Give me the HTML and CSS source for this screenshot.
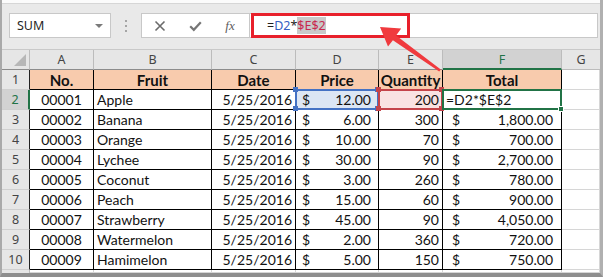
FILE: index.html
```html
<!DOCTYPE html>
<html lang="en">
<head>
  <meta charset="UTF-8">
  <meta name="viewport" content="width=device-width, initial-scale=1.0">
  <title>Fruit sheet - absolute reference</title>
  <link rel="stylesheet" href="styles.css">
</head>
<body>
  <div class="window">
    <div class="toolbar">
      <div class="namebox">
        <span class="name">SUM</span>
        <span class="caret"></span>
      </div>
      <div class="grip"><i></i><i></i><i></i></div>
      <div class="fbuttons">
        <svg class="btn-icon" width="12" height="12" viewBox="0 0 12 12">
          <path d="M1.5 1.5 L10.5 10.5 M10.5 1.5 L1.5 10.5" stroke="#6b6b6b" stroke-width="1.6" fill="none"/>
        </svg>
        <svg class="btn-icon" width="13" height="12" viewBox="0 0 13 12">
          <path d="M1.2 6.2 L4.8 9.8 L11.8 2.2" stroke="#767676" stroke-width="2.2" fill="none"/>
        </svg>
        <span class="fx">fx</span>
      </div>
      <div class="formula">
        <div class="mark">=<span class="ref-d">D2</span>*<span class="ref-e">$E$2</span></div>
      </div>
    </div>

    <div class="sheet">
      <!-- column headers -->
      <div class="hc corner"><span class="tri"></span></div>
      <div class="hc">A</div>
      <div class="hc">B</div>
      <div class="hc">C</div>
      <div class="hc">D</div>
      <div class="hc">E</div>
      <div class="hc sel">F</div>
      <div class="hc last">G</div>

      <!-- row 1 -->
      <div class="rh">1</div>
      <div class="c t head">No.</div>
      <div class="c t head">Fruit</div>
      <div class="c t head">Date</div>
      <div class="c t head">Price</div>
      <div class="c t head">Quantity</div>
      <div class="c t head">Total</div>
      <div class="c g"></div>

      <!-- row 2 -->
      <div class="rh sel">2</div>
      <div class="c t ctr">00001</div>
      <div class="c t">Apple</div>
      <div class="c t num">5/25/2016</div>
      <div class="c t acc sel-blue"><span>$</span><span>12.00</span><i class="h tl"></i><i class="h tr"></i><i class="h bl"></i><i class="h br"></i></div>
      <div class="c t num sel-red">200<i class="h tl"></i><i class="h tr"></i><i class="h bl"></i><i class="h br"></i></div>
      <div class="c t active">=D2*$E$2<i class="fill"></i></div>
      <div class="c g"></div>

      <!-- row 3 -->
      <div class="rh">3</div>
      <div class="c t ctr">00002</div>
      <div class="c t">Banana</div>
      <div class="c t num">5/25/2016</div>
      <div class="c t acc"><span>$</span><span>6.00</span></div>
      <div class="c t num">300</div>
      <div class="c t acc total"><span>$</span><span>1,800.00</span></div>
      <div class="c g"></div>

      <!-- row 4 -->
      <div class="rh">4</div>
      <div class="c t ctr">00003</div>
      <div class="c t">Orange</div>
      <div class="c t num">5/25/2016</div>
      <div class="c t acc"><span>$</span><span>10.00</span></div>
      <div class="c t num">70</div>
      <div class="c t acc total"><span>$</span><span>700.00</span></div>
      <div class="c g"></div>

      <!-- row 5 -->
      <div class="rh">5</div>
      <div class="c t ctr">00004</div>
      <div class="c t">Lychee</div>
      <div class="c t num">5/25/2016</div>
      <div class="c t acc"><span>$</span><span>30.00</span></div>
      <div class="c t num">90</div>
      <div class="c t acc total"><span>$</span><span>2,700.00</span></div>
      <div class="c g"></div>

      <!-- row 6 -->
      <div class="rh">6</div>
      <div class="c t ctr">00005</div>
      <div class="c t">Coconut</div>
      <div class="c t num">5/25/2016</div>
      <div class="c t acc"><span>$</span><span>3.00</span></div>
      <div class="c t num">260</div>
      <div class="c t acc total"><span>$</span><span>780.00</span></div>
      <div class="c g"></div>

      <!-- row 7 -->
      <div class="rh">7</div>
      <div class="c t ctr">00006</div>
      <div class="c t">Peach</div>
      <div class="c t num">5/25/2016</div>
      <div class="c t acc"><span>$</span><span>15.00</span></div>
      <div class="c t num">60</div>
      <div class="c t acc total"><span>$</span><span>900.00</span></div>
      <div class="c g"></div>

      <!-- row 8 -->
      <div class="rh">8</div>
      <div class="c t ctr">00007</div>
      <div class="c t">Strawberry</div>
      <div class="c t num">5/25/2016</div>
      <div class="c t acc"><span>$</span><span>45.00</span></div>
      <div class="c t num">90</div>
      <div class="c t acc total"><span>$</span><span>4,050.00</span></div>
      <div class="c g"></div>

      <!-- row 9 -->
      <div class="rh">9</div>
      <div class="c t ctr">00008</div>
      <div class="c t">Watermelon</div>
      <div class="c t num">5/25/2016</div>
      <div class="c t acc"><span>$</span><span>2.00</span></div>
      <div class="c t num">360</div>
      <div class="c t acc total"><span>$</span><span>720.00</span></div>
      <div class="c g"></div>

      <!-- row 10 -->
      <div class="rh">10</div>
      <div class="c t ctr">00009</div>
      <div class="c t">Hamimelon</div>
      <div class="c t num">5/25/2016</div>
      <div class="c t acc"><span>$</span><span>5.00</span></div>
      <div class="c t num">150</div>
      <div class="c t acc total"><span>$</span><span>750.00</span></div>
      <div class="c g"></div>

      <!-- row 11, cut off -->
      <div class="rh cut"></div>
      <div class="c g"></div>
      <div class="c g"></div>
      <div class="c g"></div>
      <div class="c g"></div>
      <div class="c g"></div>
      <div class="c g"></div>
      <div class="c g"></div>
    </div>

    <svg class="arrow" width="603" height="277" viewBox="0 0 603 277">
      <polygon points="380,27 388,46.5 392.9,40.2 439.2,71.6 440.8,69.6 396.1,35.4 401.2,28.6" fill="#f03a3e"/>
    </svg>
  </div>
</body>
</html>
```

FILE: styles.css
```css
* {
  margin: 0;
  padding: 0;
  box-sizing: border-box;
}

body {
  background: #fff;
  font-family: Lato, "Liberation Sans", sans-serif;
}

.window {
  width: 603px;
  height: 277px;
  position: relative;
  overflow: hidden;
  background: #fbfbfb;
  border-left: 2px solid #a9a9a9;
  border-right: 3px solid #b0b0b0;
  border-bottom: 4px solid #8e8e8e;
}

/* formula bar */

.toolbar {
  display: flex;
  align-items: stretch;
  height: 47px;
  margin-top: 3px;
  padding: 9px 2px 11px 7px;
  background: #e9e9e9;
  border-top: 1px solid #d6d6d6;
  border-bottom: 1px solid #c9c9c9;
  font-family: "Noto Sans", sans-serif;
}

.namebox {
  width: 102px;
  display: flex;
  align-items: center;
  justify-content: space-between;
  padding: 0 7px 0 7px;
  background: #fff;
  border: 1px solid #c8c8c8;
}

.name {
  font-size: 12.5px;
  color: #262626;
}

.caret {
  width: 0;
  height: 0;
  border-left: 4px solid transparent;
  border-right: 4px solid transparent;
  border-top: 4px solid #7a7a7a;
}

.grip {
  width: 30px;
  display: flex;
  flex-direction: column;
  align-items: center;
  justify-content: center;
  gap: 3px;
}

.grip i {
  width: 2px;
  height: 2px;
  background: #a5a5a5;
}

.fbuttons {
  width: 109px;
  display: flex;
  align-items: center;
  justify-content: space-around;
  background: #fff;
  border: 1px solid #c8c8c8;
}

.fx {
  font-family: "Liberation Serif", serif;
  font-style: italic;
  font-size: 13px;
  color: #5c5c5c;
  width: 12px;
}

.formula {
  flex: 1;
  display: flex;
  background: #fff;
  border: 1px solid #c8c8c8;
  border-left: none;
}

.mark {
  width: 159px;
  margin: -1px 0 -1px 1px;
  padding-left: 13px;
  display: flex;
  align-items: center;
  border: 3px solid #e8202b;
  font-size: 12.5px;
  color: #1e1e1e;
}

.ref-d {
  color: #345fc2;
}

.ref-e {
  color: #c8284f;
  background: #c9c9c9;
}

/* grid */

.sheet {
  display: grid;
  grid-template-columns: 28px 64px 118px 84px 83px 64px 119px 1fr;
  grid-template-rows: repeat(11, 20px) 3px;
  background: #fff;
}

.hc {
  display: flex;
  align-items: center;
  justify-content: center;
  background: #e6e6e6;
  border-right: 1px solid #bcbcbc;
  border-bottom: 1px solid #8c8c8c;
  font-family: "Noto Sans", sans-serif;
  font-size: 12.5px;
  color: #444;
}

.hc.last {
  border-right: none;
  border-bottom-color: #bcbcbc;
}

.hc.sel {
  background: #d2d2d2;
  color: #217346;
  border-bottom: 2px solid #217346;
}

.hc.corner {
  align-items: flex-end;
  justify-content: flex-end;
  padding: 0 3px 3px 0;
}

.tri {
  width: 0;
  height: 0;
  border-left: 12px solid transparent;
  border-bottom: 12px solid #b7b7b7;
}

.rh {
  display: flex;
  align-items: center;
  justify-content: center;
  background: #e6e6e6;
  border-right: 1px solid #222;
  border-bottom: 1px solid #cfcfcf;
  font-family: "Noto Sans", sans-serif;
  font-size: 12.5px;
  color: #444;
}

.rh.sel {
  background: #d2d2d2;
  color: #217346;
  border-right: 2px solid #217346;
}

.rh.cut {
  border-right-color: #bcbcbc;
  border-bottom: none;
}

.c {
  display: flex;
  align-items: center;
  padding: 0 3px;
  font-size: 14px;
  color: #111;
  white-space: nowrap;
  border-right: 1px solid #d6d6d6;
  border-bottom: 1px solid #d6d6d6;
}

.c.t {
  border-right-color: #000;
  border-bottom-color: #000;
}

.c.head {
  justify-content: center;
  background: #f8cbad;
  font-weight: bold;
  font-size: 15px;
}

.ctr {
  justify-content: center;
}

.num {
  justify-content: flex-end;
}

.acc {
  justify-content: space-between;
  padding: 0 7px 0 6px;
}

.acc.total {
  padding: 0 8px 0 9px;
}

/* selection boxes in row 2 */

.sel-blue,
.sel-red,
.active {
  position: relative;
  z-index: 2;
}

.sel-blue {
  background: #dce6f4;
}

.sel-red {
  background: #f9e2e2;
  z-index: 3;
}

.active {
  z-index: 4;
}

.sel-blue::after,
.sel-red::after,
.active::after {
  content: "";
  position: absolute;
  top: -1px;
  left: -1px;
  right: -1px;
  bottom: -1px;
  border: 2px solid #4472c4;
}

.sel-red::after {
  border-color: #c4434a;
}

.active::after {
  border-color: #217346;
}

.h {
  position: absolute;
  width: 5px;
  height: 5px;
  z-index: 1;
  background: #4472c4;
}

.sel-red .h {
  background: #c4434a;
}

.h.tl { left: -3px; top: -3px; }
.h.tr { right: -2px; top: -3px; }
.h.bl { left: -3px; bottom: -2px; }
.h.br { right: -2px; bottom: -2px; }

.fill {
  position: absolute;
  right: -3px;
  bottom: -3px;
  width: 6px;
  height: 6px;
  z-index: 1;
  background: #217346;
  border: 1px solid #fff;
}

.arrow {
  position: absolute;
  top: 0;
  left: -2px;
  z-index: 10;
  pointer-events: none;
}
```
